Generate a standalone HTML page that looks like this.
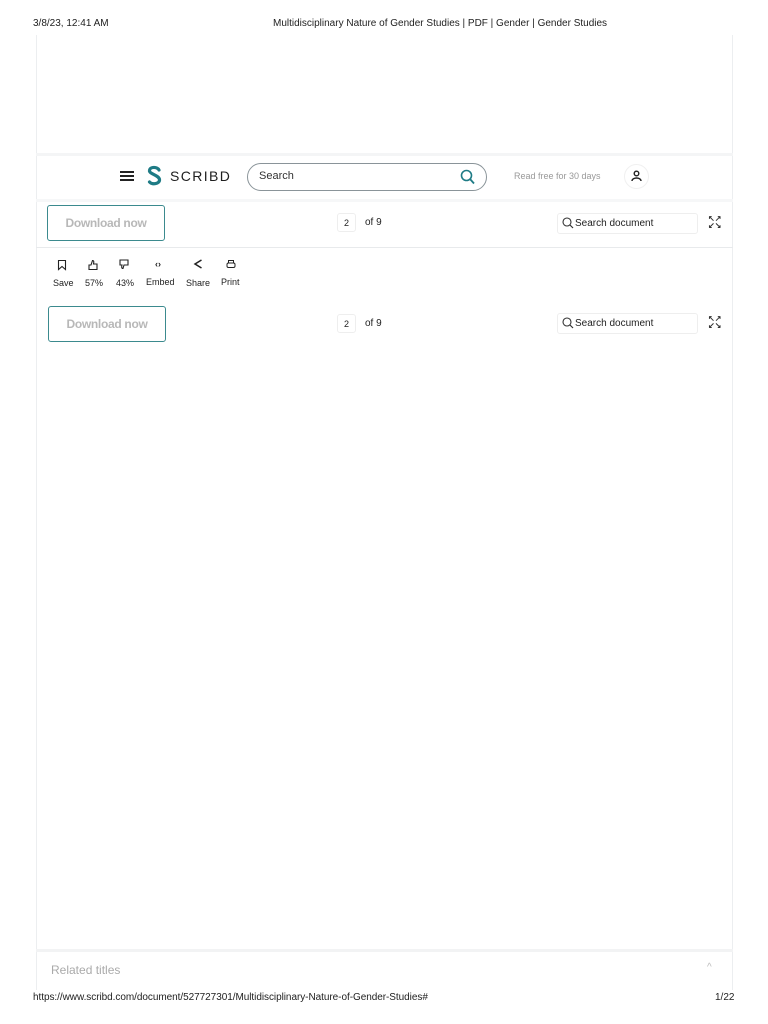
<!DOCTYPE html>
<html><head><meta charset="utf-8"><style>
*{margin:0;padding:0;box-sizing:border-box}
body{width:768px;height:1024px;background:#fff;position:relative;font-family:"Liberation Sans",sans-serif;overflow:hidden}
.a{position:absolute}
.hdr{font-size:10px;color:#222;top:18px}
.frame{left:36px;top:35px;width:697px;height:955px;border-left:1px solid #eceef0;border-right:1px solid #eceef0}
.t{color:#1e1e1e;font-size:11px}
.dl{border:1px solid #3b8a8e;border-radius:3px;color:#b8b8b8;font-size:12px;font-weight:bold;text-align:center;line-height:34px;letter-spacing:-0.3px}
.pg{border:1px solid #eee;border-radius:3px;font-size:9px;text-align:center;line-height:18px;color:#222;width:19px;height:19px}
.sd{border:1px solid #eee;border-radius:3px;width:141px;height:21px;font-size:10px;color:#222;line-height:19px;padding-left:17px}
.lbl{font-size:9px;color:#222;top:277px}
</style></head><body>
<div class="a hdr" style="left:33px">3/8/23, 12:41 AM</div>
<div class="a hdr" style="left:273px">Multidisciplinary Nature of Gender Studies | PDF | Gender | Gender Studies</div>
<div class="a frame"></div>
<div class="a" style="left:36px;top:153px;width:697px;height:3px;background:#f4f5f6"></div>
<div class="a" style="left:36px;top:199px;width:697px;height:3px;background:#f6f7f8"></div>
<div class="a" style="left:120px;top:171px;width:14px;height:2px;background:#222;box-shadow:0 4px 0 #222,0 8px 0 #222"></div>
<svg class="a" style="left:146px;top:165px" width="17" height="22" viewBox="0 0 17 22"><path d="M13 5 C12 2 4 1 3.5 5.5 C3 9 13 10 13.5 14.5 C14 19 6 20 3.5 17" fill="none" stroke="#1e7b85" stroke-width="3.2" stroke-linecap="round"/></svg>
<div class="a" style="left:170px;top:168px;font-size:14px;letter-spacing:1.4px;color:#1e1e1e">SCRIBD</div>
<div class="a" style="left:247px;top:163px;width:240px;height:28px;border:1px solid #8a9499;border-radius:14px"></div>
<div class="a t" style="left:259px;top:170px;color:#333">Search</div>
<svg class="a" style="left:460px;top:169px" width="15" height="16"><circle cx="6.5" cy="6.5" r="5" fill="none" stroke="#1e7b85" stroke-width="1.6"/><path d="M10 10 L14 14.5" stroke="#1e7b85" stroke-width="1.8"/></svg>
<div class="a" style="left:514px;top:171px;font-size:9px;color:#999">Read free for 30 days</div>
<div class="a" style="left:624px;top:164px;width:25px;height:25px;border-radius:50%;border:1px solid #f0f0f0"></div>
<svg class="a" style="left:630px;top:170px" width="13" height="13"><circle cx="6.5" cy="3.5" r="2.3" fill="none" stroke="#222" stroke-width="1.4"/><path d="M2 11 C2 7 11 7 11 11" fill="none" stroke="#222" stroke-width="1.4"/></svg>
<div class="a dl" style="left:47px;top:205px;width:118px;height:36px">Download now</div>
<div class="a pg" style="left:337px;top:213px">2</div>
<div class="a t" style="left:365px;top:217px;font-size:10px">of 9</div>
<div class="a sd" style="left:557px;top:213px">Search document</div>
<svg class="a" style="left:562px;top:217px" width="12" height="12"><circle cx="5" cy="5" r="4" fill="none" stroke="#333" stroke-width="1.1"/><path d="M8 8 L11 11" stroke="#333" stroke-width="1.2"/></svg>
<div class="a" style="left:708px;top:215px;font-size:8px;color:#333;line-height:7px;font-weight:bold">↖↗<br>↙↘</div>
<div class="a" style="left:36px;top:247px;width:697px;height:1px;background:#e8eaec"></div>
<svg class="a" style="left:56px;top:259px" width="12" height="12"><path d="M2.5 1.5 H9.5 V10.5 L6 7.5 L2.5 10.5 Z" fill="none" stroke="#222" stroke-width="1.1"/></svg>
<svg class="a" style="left:87px;top:259px" width="12" height="12"><path d="M2 6 H4 L5.5 1.5 C7 1.5 7 3 6.5 5 H10 V10.5 H2 Z" fill="none" stroke="#222" stroke-width="1.1"/></svg>
<svg class="a" style="left:118px;top:258px" width="12" height="12"><path d="M2 2 H10 V7 H6 L5 10.5 C3.5 10.5 3.5 9 4 7 H2 Z" fill="none" stroke="#222" stroke-width="1.1"/></svg>
<div class="a" style="left:155px;top:259px;font-size:9px;font-weight:bold;color:#222">‹›</div>
<svg class="a" style="left:192px;top:258px" width="12" height="12"><path d="M9.5 2 L3 6 L9.5 10" fill="none" stroke="#222" stroke-width="1.5"/></svg>
<svg class="a" style="left:225px;top:259px" width="12" height="12"><rect x="2" y="4" width="8" height="4.5" rx="1.5" fill="none" stroke="#222" stroke-width="1"/><rect x="3.5" y="1.5" width="5" height="2.5" fill="none" stroke="#222" stroke-width="1"/></svg>
<div class="a lbl" style="left:53px;top:278px">Save</div>
<div class="a lbl" style="left:85px;top:278px">57%</div>
<div class="a lbl" style="left:116px;top:278px">43%</div>
<div class="a lbl" style="left:146px">Embed</div>
<div class="a lbl" style="left:186px;top:278px">Share</div>
<div class="a lbl" style="left:221px">Print</div>
<div class="a dl" style="left:48px;top:306px;width:118px;height:36px">Download now</div>
<div class="a pg" style="left:337px;top:314px">2</div>
<div class="a t" style="left:365px;top:318px;font-size:10px">of 9</div>
<div class="a sd" style="left:557px;top:313px">Search document</div>
<svg class="a" style="left:562px;top:317px" width="12" height="12"><circle cx="5" cy="5" r="4" fill="none" stroke="#333" stroke-width="1.1"/><path d="M8 8 L11 11" stroke="#333" stroke-width="1.2"/></svg>
<div class="a" style="left:708px;top:315px;font-size:8px;color:#333;line-height:7px;font-weight:bold">↖↗<br>↙↘</div>
<div class="a" style="left:36px;top:949px;width:697px;height:3px;background:#f2f3f4"></div>
<div class="a" style="left:51px;top:963px;font-size:12px;color:#aaa">Related titles</div>
<div class="a" style="left:707px;top:962px;font-size:10px;color:#bbb">^</div>
<div class="a" style="left:33px;top:992px;font-size:10px;color:#222;letter-spacing:-0.05px">https://www.scribd.com/document/527727301/Multidisciplinary-Nature-of-Gender-Studies#</div>
<div class="a" style="left:715px;top:992px;font-size:10px;color:#222">1/22</div>
</body></html>
